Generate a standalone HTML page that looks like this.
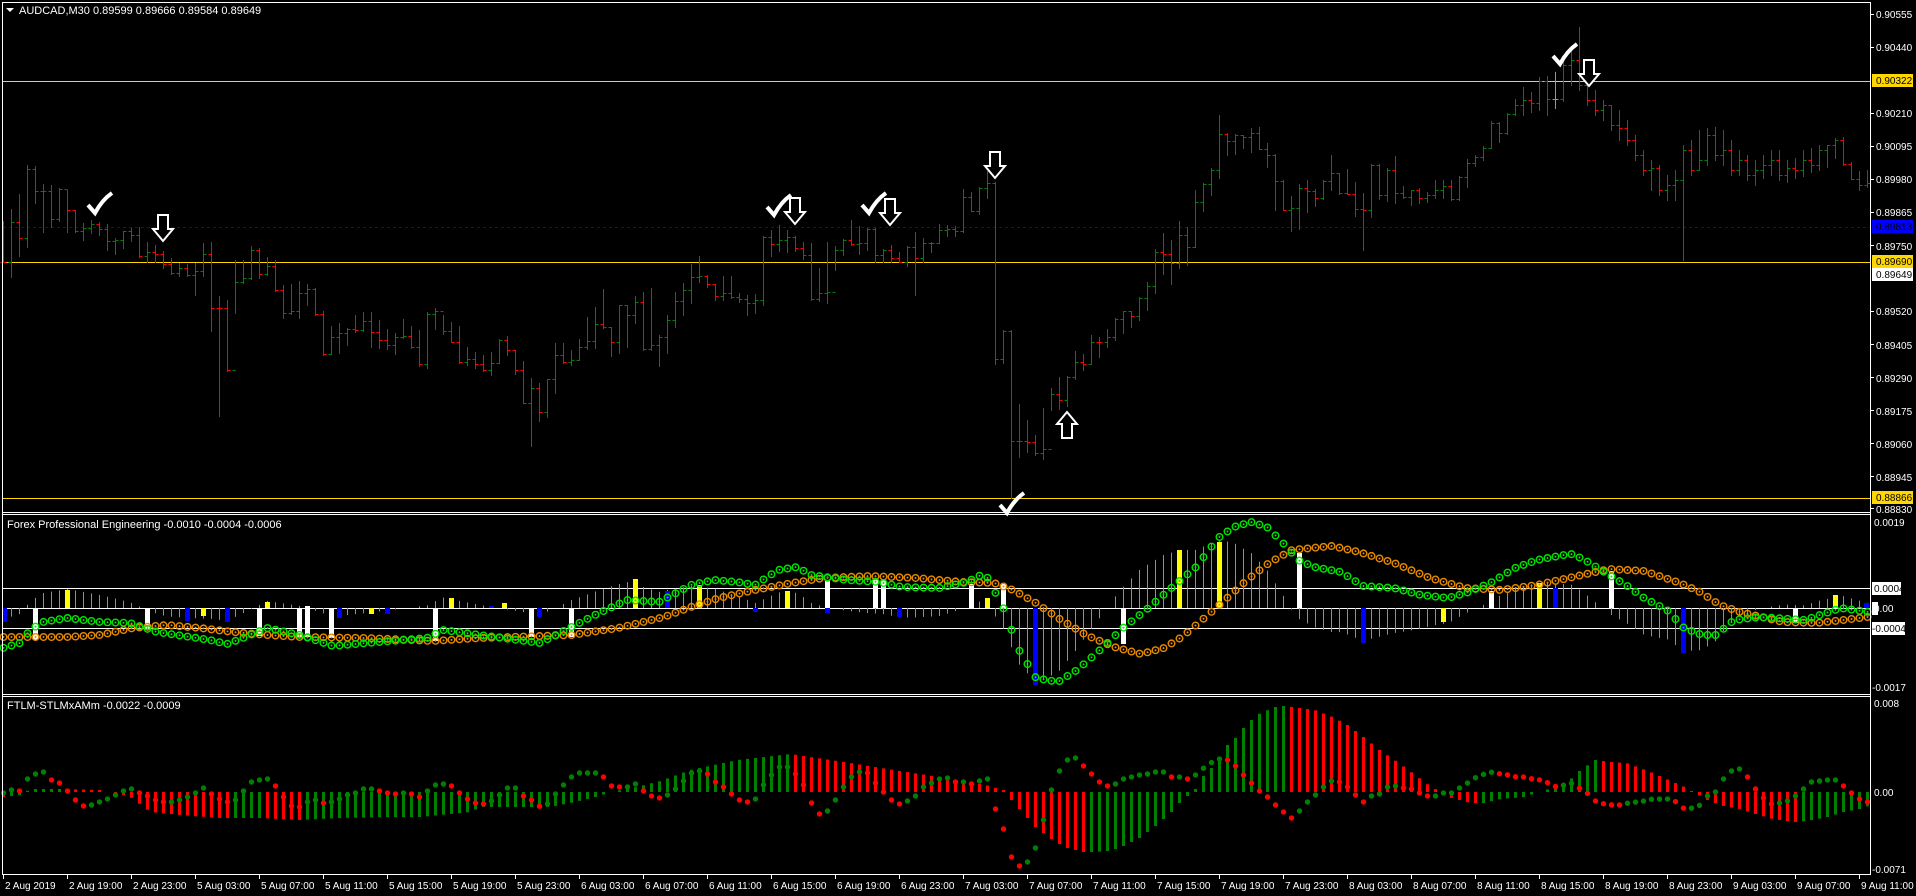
<!DOCTYPE html>
<html><head><meta charset="utf-8"><style>
html,body{margin:0;padding:0;background:#000;width:1916px;height:896px;overflow:hidden}
svg{display:block}
text{font-family:"Liberation Sans",sans-serif;font-size:10px;fill:#fff}
text.t{font-size:11px}
</style></head><body>
<svg id="s" width="1916" height="896" viewBox="0 0 1916 896" xmlns="http://www.w3.org/2000/svg">
<rect width="1916" height="896" fill="#000"/>
<g id="d"></g>
<g stroke="#fff" stroke-width="1" fill="none" shape-rendering="crispEdges">
<line x1="2.5" y1="2.5" x2="1870.5" y2="2.5"/>
<line x1="2.5" y1="2" x2="2.5" y2="875"/>
<line x1="1870.5" y1="2" x2="1870.5" y2="875"/>
<line x1="2" y1="512.5" x2="1871" y2="512.5"/>
<line x1="2" y1="514.5" x2="1871" y2="514.5"/>
<line x1="2" y1="694.5" x2="1871" y2="694.5"/>
<line x1="2" y1="696.5" x2="1871" y2="696.5"/>
<line x1="2" y1="874.5" x2="1871" y2="874.5"/>
</g>
<polygon points="6,8 14,8 10,12" fill="#fff"/>
<text class="t" x="19" y="14">AUDCAD,M30  0.89599 0.89666 0.89584 0.89649</text>
<text class="t" x="7" y="528">Forex Professional Engineering -0.0010 -0.0004 -0.0006</text>
<text class="t" x="7" y="709">FTLM-STLMxAMm -0.0022 -0.0009</text>
<g fill="#fff">
<rect x="1872" y="74" width="41" height="13" fill="#ffd700"/>
<rect x="1872" y="220" width="41" height="13" fill="#0000ff"/>
<rect x="1872" y="255" width="41" height="13" fill="#ffd700"/>
<rect x="1872" y="268" width="41" height="13" fill="#fff"/>
<rect x="1872" y="491" width="41" height="13" fill="#ffd700"/>
<rect x="1872" y="582" width="29" height="13" fill="#fff"/>
<rect x="1872" y="602" width="6" height="13" fill="#fff"/>
<rect x="1872" y="622" width="33" height="13" fill="#fff"/>
</g>
<g stroke="#fff" shape-rendering="crispEdges" id="tk"></g>
<g>
<text x="1876" y="18">0.90555</text>
<text x="1876" y="51">0.90440</text>
<text x="1876" y="84" style="fill:#000">0.90322</text>
<text x="1876" y="117">0.90210</text>
<text x="1876" y="150">0.90095</text>
<text x="1876" y="183">0.89980</text>
<text x="1876" y="216">0.89865</text>
<text x="1876" y="230" style="fill:#000">0.89813</text>
<text x="1876" y="250">0.89750</text>
<text x="1876" y="265" style="fill:#000">0.89690</text>
<text x="1876" y="278" style="fill:#000">0.89649</text>
<text x="1876" y="315">0.89520</text>
<text x="1876" y="349">0.89405</text>
<text x="1876" y="382">0.89290</text>
<text x="1876" y="415">0.89175</text>
<text x="1876" y="448">0.89060</text>
<text x="1876" y="481">0.88945</text>
<text x="1876" y="501" style="fill:#000">0.88866</text>
<text x="1876" y="513">0.88830</text>
<text x="1874" y="526">0.0019</text>
<text x="1874" y="592" style="fill:#000">0.0004</text>
<text x="1874" y="612">0.00</text>
<text x="1872" y="632" style="fill:#000">-0.0004</text>
<text x="1872" y="691">-0.0017</text>
<text x="1874" y="707">0.008</text>
<text x="1874" y="796">0.00</text>
<text x="1872" y="873">-0.0071</text>
</g>
<g>
<text x="5" y="889">2 Aug 2019</text>
<text x="69" y="889">2 Aug 19:00</text>
<text x="133" y="889">2 Aug 23:00</text>
<text x="197" y="889">5 Aug 03:00</text>
<text x="261" y="889">5 Aug 07:00</text>
<text x="325" y="889">5 Aug 11:00</text>
<text x="389" y="889">5 Aug 15:00</text>
<text x="453" y="889">5 Aug 19:00</text>
<text x="517" y="889">5 Aug 23:00</text>
<text x="581" y="889">6 Aug 03:00</text>
<text x="645" y="889">6 Aug 07:00</text>
<text x="709" y="889">6 Aug 11:00</text>
<text x="773" y="889">6 Aug 15:00</text>
<text x="837" y="889">6 Aug 19:00</text>
<text x="901" y="889">6 Aug 23:00</text>
<text x="965" y="889">7 Aug 03:00</text>
<text x="1029" y="889">7 Aug 07:00</text>
<text x="1093" y="889">7 Aug 11:00</text>
<text x="1157" y="889">7 Aug 15:00</text>
<text x="1221" y="889">7 Aug 19:00</text>
<text x="1285" y="889">7 Aug 23:00</text>
<text x="1349" y="889">8 Aug 03:00</text>
<text x="1413" y="889">8 Aug 07:00</text>
<text x="1477" y="889">8 Aug 11:00</text>
<text x="1541" y="889">8 Aug 15:00</text>
<text x="1605" y="889">8 Aug 19:00</text>
<text x="1669" y="889">8 Aug 23:00</text>
<text x="1733" y="889">9 Aug 03:00</text>
<text x="1797" y="889">9 Aug 07:00</text>
<text x="1861" y="889">9 Aug 11:00</text>
</g>
</svg>
<script>
(function(){
var out=[];
function L(x1,y1,x2,y2,c,w){out.push('<line x1="'+x1+'" y1="'+y1+'" x2="'+x2+'" y2="'+y2+'" stroke="'+c+'" stroke-width="'+(w||1)+'"/>');}
function R(x,y,w,h,c){if(h<0){y+=h;h=-h;}out.push('<rect x="'+x+'" y="'+y+'" width="'+w+'" height="'+h+'" fill="'+c+'"/>');}
function C(x,y,r,f,s,sw){out.push('<circle cx="'+x+'" cy="'+y+'" r="'+r+'" fill="'+f+'"'+(s?' stroke="'+s+'" stroke-width="'+sw+'"':'')+'/>');}
function interp(p,x){if(x<=p[0][0])return p[0][1];for(var i=1;i<p.length;i++){if(x<=p[i][0]){var a=p[i-1],b=p[i];return a[1]+(b[1]-a[1])*(x-a[0])/(b[0]-a[0]);}}return p[p.length-1][1];}
var tk=[];
[14,47,113,146,179,212,245,311,344,377,410,443,476,508].forEach(function(y){tk.push('<line x1="1871" y1="'+(y+.5)+'" x2="1874" y2="'+(y+.5)+'"/>');});
for(var i=0;i<30;i++){var x=3+64*i+.5;tk.push('<line x1="'+x+'" y1="875" x2="'+x+'" y2="879"/>');}
document.getElementById('tk').innerHTML=tk.join('');
L(3,81.5,1870,81.5,'#ffd700');L(3,262.5,1870,262.5,'#ffd700');L(3,498.5,1870,498.5,'#ffd700');
out.push('<line x1="3" y1="227.5" x2="1870" y2="227.5" stroke="#0000ff" stroke-dasharray="3,3"/>');
var B=[[221,262,262],[209,277,222],[194,256,238],[165,247,169],[166,203,191],[184,232,191],[185,227,219],[188,221,189],[190,232,210],[210,232,231],[223,240,228],[220,233,224],[222,235,229],[224,250,241],[238,254,240],[231,248,231],[228,241,235],[227,257,256],[242,262,252],[245,262,254],[251,268,264],[258,274,273],[263,276,268],[264,276,275],[263,295,271],[243,276,254],[242,331,308],[296,416,308],[300,371,370],[260,313,282],[260,283,278],[246,279,250],[248,278,274],[257,275,266],[260,291,290],[285,318,313],[284,314,311],[281,318,293],[284,305,289],[288,315,314],[311,355,354],[326,354,337],[323,353,333],[328,345,329],[315,332,330],[312,331,321],[312,347,332],[320,348,340],[329,349,345],[333,354,337],[319,338,336],[326,348,347],[330,366,364],[312,368,314],[308,329,311],[315,334,331],[322,342,342],[326,363,362],[347,365,359],[352,368,364],[355,371,370],[352,375,363],[339,363,340],[336,355,350],[350,374,370],
[361,403,403],[378,446,388],[383,421,412],[379,417,379],[343,393,355],[343,363,362],[350,365,360],[339,360,347],[317,349,341],[307,348,324],[289,328,327],[327,356,342],[305,353,305],[305,347,315],[296,323,302],[292,350,349],[288,350,345],[335,366,337],[315,353,320],[292,327,301],[283,315,290],[264,303,277],[256,282,276],[275,287,284],[284,300,296],[276,300,293],[276,298,297],[293,302,299],[295,315,303],[294,313,300],[236,305,237],[230,256,244],[225,251,240],[230,252,237],[236,251,248],[242,259,255],[243,300,299],[268,301,293],[242,303,292],[246,270,250],[239,255,240],[220,245,244],[226,254,243],[228,250,229],[228,262,255],[249,262,250],[245,262,258],[252,262,262],[246,266,247],[232,295,258],[238,262,243],[242,252,243],[224,243,230],[225,236,229],[226,236,231],[189,232,197],[192,211,211],[187,214,188],[171,198,183],[182,364,359],[330,363,331],[330,498,441],[404,457,441],[420,452,442],[435,455,453],[408,459,449],
[388,410,394],[377,409,400],[376,406,377],[351,379,362],[354,370,364],[335,364,342],[337,357,342],[329,347,337],[318,340,319],[311,333,311],[311,327,316],[297,320,298],[282,310,286],[249,293,252],[233,274,254],[240,284,263],[221,268,235],[227,265,247],[190,247,202],[183,211,184],[168,195,170],[115,178,134],[133,155,141],[134,154,135],[135,148,137],[128,152,133],[127,149,149],[143,167,155],[154,210,181],[180,210,210],[196,231,208],[184,229,188],[180,212,191],[189,206,198],[180,199,181],[155,190,173],[173,194,193],[169,194,194],[182,216,209],[193,250,210],[164,217,165],[164,199,195],[168,201,170],[156,203,193],[186,198,197],[190,205,190],[188,203,198],[192,202,195],[180,198,190],[180,198,186],[180,200,199],[176,200,177],[159,187,163],[155,166,157],[146,160,148],[121,148,123],[122,142,133],[113,134,114],[99,115,105],[87,115,100],[92,112,103],[77,110,81],[76,115,99],[72,108,99],[57,101,65],
[50,85,60],[27,90,85],[80,105,100],[90,115,110],[100,120,105],[105,130,125],[110,140,128],[120,145,140],[135,160,155],[150,175,170],[160,190,168],[165,195,190],[175,200,185],[170,200,180],[145,260,150],[140,175,170],[130,170,160],[128,165,135],[127,160,155],[130,165,150],[140,175,170],[150,175,160],[155,180,175],[160,185,170],[155,178,165],[150,175,160],[150,180,175],[160,182,168],[158,178,170],[150,176,160],[148,172,165],[145,170,150],[145,167,145],[138,158,140],[137,165,164],[162,179,179],[171,190,185],[170,187,183]];
var prev=B[0][1];
B.forEach(function(b,k){var x=3+8*k+.5,o=prev,c=b[2];var col=(c<o)?'#0a7a0a':'#ff0000';if(k==194)col='#00ff00';
L(x,b[0],x,b[1]+1,col);L(x-3,o+.5,x,o+.5,col);L(x,c+.5,x+3,c+.5,col);prev=c;});
function dn(cx,t){out.push('<polygon points="'+(cx-5)+','+t+' '+(cx+5)+','+t+' '+(cx+5)+','+(t+14)+' '+(cx+10)+','+(t+14)+' '+cx+','+(t+26)+' '+(cx-10)+','+(t+14)+' '+(cx-5)+','+(t+14)+'" fill="#000" stroke="#fff" stroke-width="2"/>');}
function up(cx,t){out.push('<polygon points="'+cx+','+t+' '+(cx+10)+','+(t+12)+' '+(cx+5)+','+(t+12)+' '+(cx+5)+','+(t+26)+' '+(cx-5)+','+(t+26)+' '+(cx-5)+','+(t+12)+' '+(cx-10)+','+(t+12)+'" fill="#000" stroke="#fff" stroke-width="2"/>');}
function ck(x,y){out.push('<path d="M'+x+','+(y+12)+' L'+(x+7)+','+(y+20)+' Q'+(x+14)+','+(y+7)+' '+(x+24)+','+y+'" fill="none" stroke="#fff" stroke-width="4"/>');}
dn(163,215);dn(795,198);dn(890,199);dn(995,152);dn(1589,60);up(1067,412);
ck(88,193);ck(767,195);ck(862,193);ck(1000,493);ck(1553,44);
var G=[[3,648],[20,643],[30,630],[43,622],[67,618],[100,622],[130,623],[157,632],[210,640],[227,644],[243,638],[267,628],[300,635],[333,646],[367,643],[427,638],[443,630],[480,635],[540,643],[595,615],[627,600],[659,602],[691,585],[714,580],[737,582],[755,585],[778,570],[797,567],[811,575],[847,580],[879,582],[902,587],[939,588],[967,582],[985,573],[1003,607],[1019,650],[1036,678],[1058,682],[1077,670],[1100,650],[1123,628],[1146,610],[1169,590],[1196,567],[1218,538],[1234,527],[1251,522],[1267,527],[1283,543],[1298,560],[1314,567],[1341,572],[1363,586],[1394,588],[1421,595],[1448,598],[1466,593],[1492,582],[1515,568],[1537,560],[1564,555],[1573,554],[1588,562],[1609,575],[1626,585],[1644,598],[1667,610],[1684,628],[1702,635],[1716,635],[1734,620],[1760,617],[1805,620],[1841,608],[1868,612]];
var O=[[3,637],[67,637],[100,635],[133,628],[167,625],[200,628],[233,632],[267,635],[300,637],[367,638],[433,641],[480,638],[572,635],[618,628],[664,617],[691,607],[719,598],[755,590],[792,583],[824,578],[870,576],[916,578],[962,582],[994,583],[1013,590],[1036,603],[1058,618],[1086,635],[1114,647],[1141,654],[1164,648],[1182,637],[1202,620],[1225,600],[1247,580],[1269,563],[1292,550],[1332,546],[1359,552],[1394,563],[1430,578],[1466,588],[1501,590],[1537,585],[1573,577],[1609,569],[1644,571],[1680,583],[1700,592],[1720,605],[1740,612],[1783,622],[1817,623],[1843,620],[1868,617]];
L(3,588.5,1870,588.5,'#fff');L(3,608.5,1870,608.5,'#fff');L(3,628.5,1870,628.5,'#fff');
for(var k=0;k<234;k++){var x=3+8*k,h=interp(O,x)-interp(G,x);if(Math.abs(h)>1)L(x+.5,608,x+.5,608-h,'#909090');}
var CB=[[4,608,622,'#0000ff'],[35,608,640,'#fff'],[67,590,608,'#ffff00'],[147,608,628,'#fff'],[187,608,621,'#0000ff'],[203,608,616,'#ffff00'],[227,608,622,'#0000ff'],[259,608,636,'#fff'],[267,602,608,'#ffff00'],[299,608,637,'#fff'],[307,606,637,'#fff'],[331,608,638,'#fff'],[339,608,618,'#0000ff'],[371,608,614,'#ffff00'],[387,608,614,'#0000ff'],[435,608,641,'#fff'],[451,598,608,'#ffff00'],[491,606,608,'#0000ff'],[504,603,608,'#ffff00'],[531,608,637,'#fff'],[539,608,617,'#0000ff'],[571,608,637,'#fff'],[635,579,608,'#ffff00'],[667,591,608,'#0000ff'],[699,585,608,'#ffff00'],[755,608,612,'#0000ff'],[787,591,608,'#ffff00'],[827,580,608,'#fff'],[827,608,613,'#0000ff'],[875,578,608,'#fff'],[883,579,608,'#fff'],[899,608,617,'#0000ff'],[971,584,608,'#fff'],[987,598,608,'#ffff00'],[1003,584,608,'#fff'],[1035,608,685,'#0000ff'],[1123,608,644,'#fff'],[1179,550,608,'#ffff00'],[1219,542,608,'#ffff00'],[1299,553,608,'#fff'],[1363,608,643,'#0000ff'],[1443,608,622,'#ffff00'],[1491,591,608,'#fff'],[1539,583,608,'#ffff00'],[1555,588,608,'#0000ff'],[1611,571,608,'#fff'],[1683,608,653,'#0000ff'],[1795,608,623,'#fff'],[1835,595,608,'#ffff00'],[1866,603,608,'#0000ff']];
CB.forEach(function(b){R(b[0]-2,b[1],5,b[2]-b[1],b[3]);});
for(var k=0;k<234;k++){var x=3+8*k+.5,y=interp(O,x);C(x,y,3.3,'none','#e88a00',1.4);C(x,y,1,'#e88a00');}
for(var k=0;k<234;k++){var x=3+8*k+.5,y=interp(G,x);C(x,y,3.3,'none','#00e600',1.4);C(x,y,1,'#00e600');}
var H=[[3,797],[20,795],[30,789],[60,789],[100,790],[115,793],[130,797],[150,812],[180,815],[220,818],[260,818],[300,820],[340,818],[380,817],[420,817],[470,812],[480,807],[549,807],[570,803],[595,797],[615,791],[636,787],[660,781],[690,770],[737,760],[790,754],[810,757],[850,763],[893,770],[939,777],[985,785],[1003,790],[1011,800],[1019,809],[1027,818],[1035,827],[1043,833],[1051,839],[1059,844],[1067,848],[1075,850],[1083,852],[1095,852],[1107,851],[1115,849],[1123,846],[1131,842],[1139,838],[1147,832],[1155,826],[1163,819],[1171,812],[1179,803],[1187,796],[1195,789],[1202,777],[1216,763],[1227,745],[1236,737],[1243,728],[1251,720],[1260,713],[1275,707],[1283,706],[1292,707],[1314,710],[1332,717],[1347,725],[1363,737],[1379,750],[1394,760],[1412,773],[1428,785],[1440,792],[1448,797],[1470,803],[1484,803],[1500,799],[1524,797],[1545,790],[1564,785],[1580,770],[1595,760],[1610,762],[1626,763],[1650,772],[1684,787],[1698,795],[1707,800],[1723,806],[1740,809],[1755,814],[1772,819],[1787,821],[1796,822],[1812,820],[1827,817],[1843,812],[1859,809],[1868,806]];
var D=[[3,793],[11,790],[19,791],[27,779],[35,774],[43,772],[51,780],[59,783],[67,791],[75,800],[83,806],[91,805],[99,802],[107,799],[115,795],[123,791],[131,789],[139,793],[147,796],[155,800],[163,802],[171,802],[179,800],[187,797],[195,793],[203,788],[211,794],[219,799],[227,802],[235,800],[243,791],[251,782],[259,780],[267,779],[275,786],[283,797],[291,806],[299,807],[307,802],[315,800],[323,803],[331,802],[339,799],[347,795],[355,793],[363,789],[371,789],[379,791],[387,793],[395,794],[403,793],[411,794],[419,797],[427,791],[435,785],[443,784],[451,786],[459,793],[467,799],[475,803],[483,804],[491,801],[499,795],[507,788],[515,788],[523,796],[531,800],[540,807],[547,804],[555,794],[563,785],[571,777],[579,773],[587,773],[595,773],[603,777],[611,786],[619,787],[627,787],[635,784],[643,791],[651,796],[659,798],[667,795],[675,789],[683,781],[691,773],[699,771],[707,774],[715,782],[723,787],[731,794],[739,800],[747,802],[755,799],[763,785],[771,775],[779,767],[787,767],[795,774],[803,785],[811,803],[819,814],[827,811],[835,800],[843,787],[851,777],[859,772],[867,773],[875,783],[883,792],[891,800],[899,804],[907,801],[915,796],[923,787],[931,783],[939,779],[947,778],[955,782],[963,782],[971,784],[979,781],[987,779],[995,809],[1003,829],[1011,857],[1019,866],[1027,862],[1035,848],[1043,820],[1051,790],[1059,771],[1067,760],[1075,758],[1083,766],[1091,774],[1099,782],[1107,786],[1115,784],[1123,779],[1131,777],[1139,775],[1147,774],[1155,772],[1163,772],[1171,777],[1179,777],[1187,779],[1195,775],[1202,769],[1210,763],[1219,759],[1227,760],[1235,766],[1243,775],[1251,783],[1259,791],[1267,797],[1275,805],[1283,812],[1291,818],[1299,811],[1307,802],[1315,795],[1323,787],[1331,781],[1339,782],[1347,787],[1355,795],[1363,802],[1371,796],[1379,794],[1387,787],[1395,786],[1403,788],[1411,789],[1419,793],[1427,796],[1435,796],[1443,793],[1451,793],[1459,788],[1467,783],[1476,777],[1484,774],[1492,772],[1500,774],[1508,775],[1516,777],[1524,777],[1532,779],[1540,780],[1548,783],[1556,787],[1564,785],[1572,783],[1580,789],[1588,794],[1596,802],[1604,804],[1612,805],[1620,805],[1628,803],[1636,802],[1644,801],[1652,799],[1660,799],[1668,799],[1676,802],[1684,809],[1692,808],[1700,805],[1707,796],[1715,792],[1723,779],[1731,771],[1739,769],[1747,777],[1755,789],[1763,798],[1771,804],[1779,803],[1787,801],[1795,796],[1803,789],[1811,782],[1819,781],[1827,780],[1835,780],[1843,786],[1851,793],[1859,799],[1867,802]];
var ph=interp(H,3);
for(var k=0;k<234;k++){var x=3+8*k,h=interp(H,x);var col=(h<ph||(h==ph&&k>0))?'#008000':'#ff0000';if(Math.abs(h-792)>=1)R(x-1,792,3,h-792,col);ph=h;}
var pd=interp(D,3)+1;
for(var k=0;k<234;k++){var x=3+8*k,d=interp(D,x);var col=(d<=pd)?'#008000':'#ff0000';C(x+.5,d,2.7,col);pd=d;}
document.getElementById('d').innerHTML=out.join('');
})();
</script>
</body></html>
